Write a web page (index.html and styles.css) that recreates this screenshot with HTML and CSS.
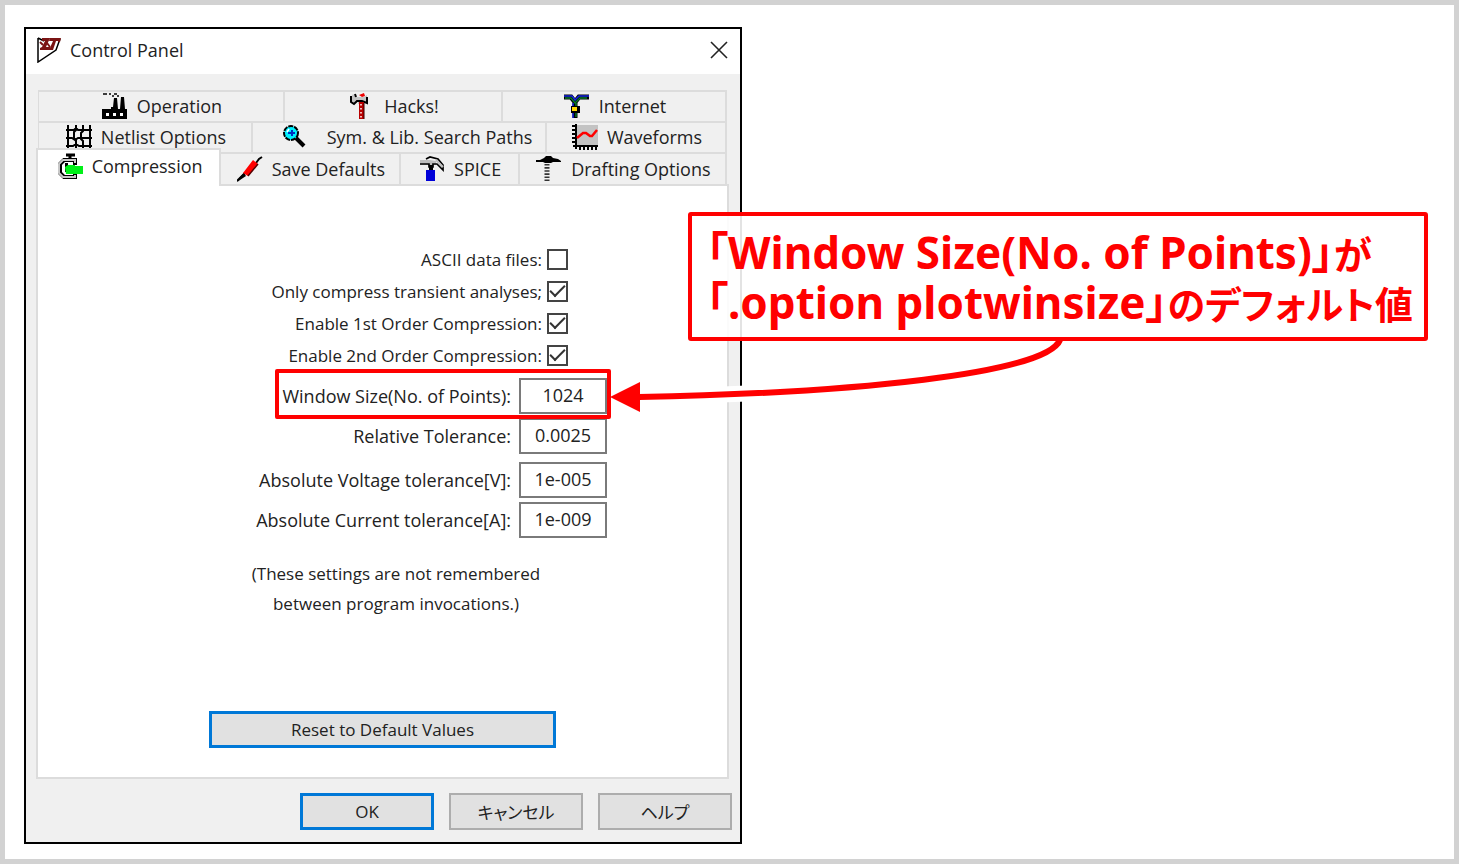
FILE: index.html
```html
<!DOCTYPE html>
<html lang="ja">
<head>
    <meta charset="UTF-8">
    <meta name="viewport" content="width=device-width, initial-scale=1.0">
    <title>Control Panel</title>
    <link rel="stylesheet" href="styles.css">
</head>
<body>

    <main class="figure">
        <section class="dialog">
            <header class="title-bar">
                <svg class="app-icon" viewBox="0 0 26 26" aria-hidden="true">
                    <path d="M2 1V25L20 13L24 2M2 1L8 4" fill="none" stroke="#000" stroke-width="1.5"/>
                    <path d="M6 1H14L10 10H14V13H4V11L6 10L9 4H6ZM14 1H25L24 5H22V4H20L17 13H13L17 4H13Z" fill="#7a1414"/>
                    <path d="M4 5L7 8M11 6L14 10" stroke="#7a1414" stroke-width="2"/>
                </svg>
                <h1>Control Panel</h1>
                <button type="button" class="close-btn" aria-label="Close">
                    <svg viewBox="0 0 18 18"><path d="M1 1L17 17M17 1L1 17" stroke="#222" stroke-width="1.6"/></svg>
                </button>
            </header>

            <div class="dialog-body">
                <div class="tabs" role="tablist">
                    <div class="tab-row row-1">
                        <button type="button" role="tab" class="tab">
                            <svg class="icon" viewBox="0 0 26 26">
                                <path d="M1 1H5M7 1H9M10 3H12M12 1H15M16 2V4" fill="none" stroke="#000" stroke-width="1.5"/>
                                <path d="M12 5H15L16 16H18L19 4H22L23 16H25V26H0V16H9V14H11Z"/>
                                <path d="M4 20H7V23H4ZM11 20H14V23H11ZM18 20H21V23H18Z" fill="#fff"/>
                            </svg>
                            Operation
                        </button>
                        <button type="button" role="tab" class="tab">
                            <svg class="icon" viewBox="0 0 26 26">
                                <path d="M2 4L4 1L7 4H15L18 2V9L14 8V11H9V8L5 11L2 9Z" fill="#c4c4c4"/>
                                <path d="M6 1L7 4M2 3V9L5 11L8 8H13L18 10V4" fill="none" stroke="#000" stroke-width="2"/>
                                <path d="M10 2L15 0L16 3L13 4Z" fill="#e00"/>
                                <path d="M10 9H15V26H10Z" fill="#b80000"/>
                                <path d="M12 11V25" stroke="#fff" stroke-width="1.5" stroke-dasharray="1.5 2.5"/>
                                <path d="M15 10V26" stroke="#300" stroke-width="1"/>
                            </svg>
                            Hacks!
                        </button>
                        <button type="button" role="tab" class="tab">
                            <svg class="icon" viewBox="0 0 26 26">
                                <path d="M0 4H7L11 9L15 4H25M11 9V25" fill="none" stroke="#000" stroke-width="5"/>
                                <path d="M0 3H8L11 7L15 3H25M9 10V25" fill="none" stroke="#1525e0" stroke-width="1.5"/>
                                <path d="M1 5H7L11 10L16 5H23M12 10V24" fill="none" stroke="#087a28" stroke-width="1.5"/>
                                <path d="M8 14H15V19H8Z" stroke="#000" stroke-width="2"/>
                                <path d="M8 14H13V18H8Z" fill="#ffd800"/>
                            </svg>
                            Internet
                        </button>
                    </div>

                    <div class="tab-row row-2">
                        <button type="button" role="tab" class="tab">
                            <svg class="icon" viewBox="0 0 26 26">
                                <path d="M2 1V25M10 1V6L8 8V14L10 16V25M17 1V7L15 9V15L17 17V25M24 1V25M0 6H8L10 4L12 6H26M0 14H6L9 16L12 14H26M0 22H7L10 20L13 22H26" fill="none" stroke="#000" stroke-width="2"/>
                            </svg>
                            Netlist Options
                        </button>
                        <button type="button" role="tab" class="tab">
                            <svg class="icon icon-wide" viewBox="0 0 50 26">
                                <path d="M28 14L36 22" stroke="#000" stroke-width="4"/>
                                <circle cx="23" cy="9" r="7" fill="#00f0ff" stroke="#000" stroke-width="2" stroke-dasharray="5 1"/>
                                <path d="M20 9H27M24 6V12" stroke="#0030c0" stroke-width="2"/>
                                <path d="M19 8L21 5" stroke="#fff" stroke-width="1.5"/>
                            </svg>
                            Sym. &amp; Lib. Search Paths
                        </button>
                        <button type="button" role="tab" class="tab">
                            <svg class="icon" viewBox="0 0 26 26">
                                <path d="M4 1H26V21H4Z" fill="#c3c3c3"/>
                                <path d="M4 0V25M1 22H26M0 2H4M0 6H4M0 10H4M0 14H4M0 18H4M8 22V26M12 22V26M16 22V26M20 22V26M24 22V26" stroke="#000" stroke-width="2"/>
                                <path d="M5 14L11 9H14L18 12H20L25 6" fill="none" stroke="#f00" stroke-width="2.5"/>
                            </svg>
                            Waveforms
                        </button>
                    </div>

                    <div class="tab-row row-3">
                        <button type="button" role="tab" class="tab active" aria-selected="true">
                            <svg class="icon" viewBox="0 0 26 26">
                                <path d="M9 2H18M13 2V7" stroke="#000" stroke-width="3"/>
                                <path d="M18 12V7H7L3 11V20L7 24H18V20" fill="#fff" stroke="#000" stroke-width="4"/>
                                <path d="M18 10V7H6L2 11V20L6 24H18V22" fill="none" stroke="#c8c8c8" stroke-width="2"/>
                                <path d="M8 10H11V19H8Z"/>
                                <path d="M8 14L11 12H18V13H26V21H9Z" fill="#00f018"/>
                            </svg>
                            Compression
                        </button>
                        <button type="button" role="tab" class="tab">
                            <svg class="icon" viewBox="0 0 26 26">
                                <path d="M0 25L8 17M19 7L22 3L25 1" fill="none" stroke="#000" stroke-width="2"/>
                                <path d="M0 26L3 21L7 17L9 20Z"/>
                                <path d="M6 17L16 4L21 8L11 20Z" fill="#f00"/>
                                <path d="M11 20L21 8" stroke="#500" stroke-width="1.5"/>
                            </svg>
                            Save Defaults
                        </button>
                        <button type="button" role="tab" class="tab">
                            <svg class="icon" viewBox="0 0 26 26">
                                <path d="M1 4H11L17 5V9H1Z" fill="#bdbdbd"/>
                                <path d="M1 8H10V11H14V8H18L24 14V9L19 3L11 1L7 3" fill="none" stroke="#000" stroke-width="1.7"/>
                                <path d="M17 4L24 11" stroke="#bdbdbd" stroke-width="2"/>
                                <path d="M10 9H14V15H10Z"/>
                                <path d="M7 14H16V25H7Z" fill="#0000d8"/>
                            </svg>
                            SPICE
                        </button>
                        <button type="button" role="tab" class="tab">
                            <svg class="icon" viewBox="0 0 26 26">
                                <path d="M0 4H4L8 2L10 0H15L17 2L22 3L25 5V6H17L15 7H9L7 6H0Z"/>
                                <path d="M11 8V25" stroke="#333" stroke-width="5" stroke-dasharray="1.6 1.5"/>
                            </svg>
                            Drafting Options
                        </button>
                    </div>
                </div>

                <form class="pane" id="compression-form">
                    <div class="checks">
                        <div class="check-row">
                            <label for="ascii">ASCII data files:</label>
                            <input type="checkbox" id="ascii">
                        </div>
                        <div class="check-row">
                            <label for="transient">Only compress transient analyses;</label>
                            <input type="checkbox" id="transient" checked>
                        </div>
                        <div class="check-row">
                            <label for="first-order">Enable 1st Order Compression:</label>
                            <input type="checkbox" id="first-order" checked>
                        </div>
                        <div class="check-row">
                            <label for="second-order">Enable 2nd Order Compression:</label>
                            <input type="checkbox" id="second-order" checked>
                        </div>
                    </div>

                    <div class="fields">
                        <div class="field-row highlight">
                            <label for="window-size">Window Size(No. of Points):</label>
                            <input type="text" id="window-size" value="1024">
                        </div>
                        <div class="field-row">
                            <label for="rel-tol">Relative Tolerance:</label>
                            <input type="text" id="rel-tol" value="0.0025">
                        </div>
                    </div>
                    <div class="fields">
                        <div class="field-row">
                            <label for="volt-tol">Absolute Voltage tolerance[V]:</label>
                            <input type="text" id="volt-tol" value="1e-005">
                        </div>
                        <div class="field-row">
                            <label for="curr-tol">Absolute Current tolerance[A]:</label>
                            <input type="text" id="curr-tol" value="1e-009">
                        </div>
                    </div>

                    <p class="note">(These settings are not remembered<br>between program invocations.)</p>

                    <button type="reset" class="btn btn-blue reset-btn">Reset to Default Values</button>
                </form>

                <footer class="actions">
                    <button type="submit" form="compression-form" class="btn btn-blue">OK</button>
                    <button type="button" class="btn">キャンセル</button>
                    <button type="button" class="btn">ヘルプ</button>
                </footer>
            </div>
        </section>

        <svg class="arrow" viewBox="0 0 460 80" aria-hidden="true">
            <path class="arrow-halo" d="M450 4C436 38 241 57 29 61"/>
            <path class="arrow-line" d="M450 4C436 38 241 57 29 61"/>
            <path class="arrow-head" d="M0 61L30 46V76Z"/>
        </svg>
        <p class="callout">「Window Size(No. of Points)」<span class="kana">が</span><br>「.option plotwinsize」<span class="kana">のデフォルト値</span></p>
    </main>

</body>
</html>
```
FILE: styles.css
```css
*, *::before, *::after {
    box-sizing: border-box;
}

body {
    margin: 0;
    font-family: "Open Sans", "Noto Sans CJK JP", sans-serif;
    font-size: 18px;
    color: #222;
    background-color: #fff;
}

button, input {
    font: inherit;
    color: inherit;
}

.figure {
    position: relative;
    min-height: 100vh;
    padding: 22px 19px 15px;
    border: 5px solid #d2d2d2;
}

/* dialog window */
.dialog {
    width: 100%;
    max-width: 718px;
    border: 2px solid #000;
    background-color: #f0f0f0;
}

.title-bar {
    display: flex;
    align-items: center;
    gap: 8px;
    height: 45px;
    padding: 0 12px 4px 10px;
    background-color: #fff;
}

.title-bar h1 {
    flex: 1;
    margin: 0;
    font-size: 18px;
    font-weight: normal;
}

.app-icon {
    width: 26px;
    height: 26px;
}

.close-btn {
    display: flex;
    padding: 0;
    border: none;
    background: none;
    cursor: pointer;
}

.close-btn svg {
    width: 18px;
    height: 18px;
}

.dialog-body {
    padding: 16px 8px 12px 10px;
}

/* tabs */
.tabs {
    padding: 0 5px 0 2px;
}

.tab-row {
    display: grid;
    height: 31px;
    border-left: 1px solid #dcdcdc;
}

.row-1 {
    grid-template-columns: 246fr 218fr 224fr;
}

.row-2 {
    grid-template-columns: 214fr 294fr 180fr;
}

.row-3 {
    grid-template-columns: 183fr 179fr 119fr 207fr;
    height: 32px;
    border-left: none;
}

.tab {
    display: flex;
    justify-content: center;
    align-items: center;
    gap: 9px;
    min-width: 0;
    padding: 0 0 1px 2px;
    border: solid #dcdcdc;
    border-width: 2px 2px 0 0;
    background-color: #f0f0f0;
    white-space: nowrap;
    cursor: pointer;
}

.tab.active {
    position: relative;
    z-index: 1;
    margin: -4px 0 -2px -2px;
    padding-bottom: 5px;
    border-left-width: 2px;
    background-color: #fff;
}

.icon {
    flex: none;
    width: 26px;
    height: 26px;
}

.icon-wide {
    width: 50px;
}

.pane {
    margin-right: 3px;
    padding: 57px 0 29px;
    border: 2px solid #dcdcdc;
    background-color: #fff;
}

/* compression settings */
.checks {
    display: grid;
    padding-right: 159px;
    margin-bottom: 7px;
    font-size: 17px;
}

.check-row, .field-row {
    display: flex;
    justify-content: flex-end;
    align-items: center;
}

.check-row {
    gap: 5px;
    height: 32px;
}

.check-row input {
    appearance: none;
    display: grid;
    place-items: center;
    width: 21px;
    height: 21px;
    margin: 0;
    border: 2px solid #444;
    background-color: #fff;
}

.check-row input:checked::before {
    content: "";
    width: 15px;
    height: 8px;
    border: solid #333;
    border-width: 0 0 2px 2px;
    transform: translateY(-2px) rotate(-45deg);
}

.fields {
    display: grid;
    gap: 4px;
    margin-bottom: 8px;
    padding-right: 120px;
}

.field-row {
    gap: 8px;
}

.field-row input {
    width: 88px;
    height: 36px;
    padding: 0 0 2px;
    border: 2px solid #7a7a7a;
    background-color: #fff;
    text-align: center;
}

.highlight {
    position: relative;
}

.highlight::after {
    content: "";
    position: absolute;
    top: -9px;
    right: -4px;
    width: 336px;
    height: 50px;
    border: 4px solid #f00;
    border-radius: 2px;
    pointer-events: none;
}

.note {
    margin: 21px 0 92px;
    padding-left: 27px;
    font-size: 17px;
    line-height: 30px;
    text-align: center;
}

.btn {
    width: 134px;
    height: 37px;
    padding: 0;
    border: 2px solid #adadad;
    background-color: #e1e1e1;
    font-size: 17px;
    font-feature-settings: "palt";
    cursor: pointer;
}

.btn-blue {
    border: 3px solid #0078d7;
}

.reset-btn {
    display: block;
    width: 347px;
    margin: 0 auto;
}

.actions {
    display: flex;
    justify-content: flex-end;
    gap: 15px;
    padding-top: 14px;
}

/* annotation laid over the dialog */
.callout {
    position: absolute;
    top: 207px;
    left: 683px;
    width: 740px;
    margin: 0;
    padding: 11px 0 10px 14px;
    border: 4px solid #f00;
    border-radius: 3px;
    background-color: rgba(255, 255, 255, 0.89);
    color: #f00;
    font-family: "Noto Sans", "Noto Sans CJK JP", sans-serif;
    font-size: 44px;
    font-weight: bold;
    line-height: 50px;
    font-feature-settings: "palt";
    white-space: nowrap;
}

.callout .kana {
    font-size: 38px;
    line-height: 1;
}

.arrow {
    position: absolute;
    top: 331px;
    left: 605px;
    width: 460px;
    height: 80px;
}

.arrow path {
    fill: none;
    stroke-width: 6;
}

.arrow .arrow-halo {
    stroke: #fff;
    stroke-width: 16;
}

.arrow .arrow-line {
    stroke: #f00;
}

.arrow .arrow-head {
    fill: #f00;
}
```
